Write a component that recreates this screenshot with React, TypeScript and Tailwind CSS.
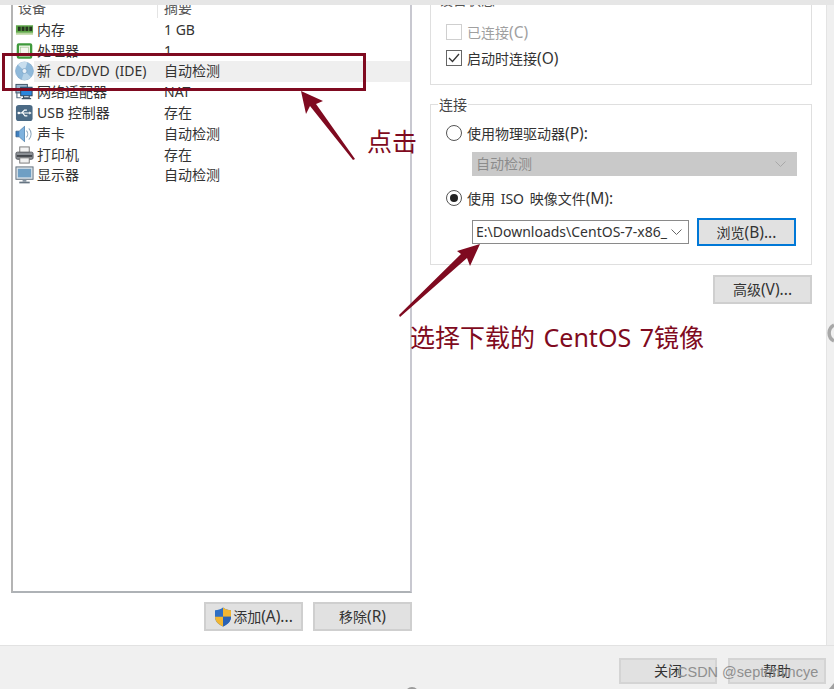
const font = "[font-family:'Noto_Sans','Noto_Sans_CJK_SC',sans-serif]";

function RamIcon() {
  return (
    <svg width="20" height="20" viewBox="0 0 20 20">
      <rect x="1" y="5" width="18" height="8" fill="#5fa84a" />
      <rect x="3" y="6.500" width="3" height="4.500" fill="#26351f" />
      <rect x="7" y="6.500" width="3" height="4.500" fill="#26351f" />
      <rect x="11" y="6.500" width="3" height="4.500" fill="#26351f" />
      <rect x="15" y="6.500" width="3" height="4.500" fill="#26351f" />
      <rect x="1" y="13" width="18" height="2" fill="#b7d49c" />
    </svg>
  );
}

function CpuIcon() {
  return (
    <svg width="20" height="20" viewBox="0 0 20 20">
      <rect x="3" y="3" width="14" height="14" rx="1" fill="#e9f3e2" stroke="#3f9a3c" strokeWidth="2.400" />
      <rect x="6" y="6" width="8" height="8" fill="#f4f7f0" stroke="#9cc48e" strokeWidth="0.600" />
    </svg>
  );
}

function DiscIcon() {
  return (
    <svg width="20" height="20" viewBox="0 0 20 20">
      <circle cx="10" cy="10" r="9.500" fill="#8fb9da" stroke="#7ea5c4" strokeWidth="0.600" />
      <path d="M10 10 L3 3.500 A9.500 9.500 0 0 1 13 1 Z" fill="#c8deee" />
      <path d="M10 10 L17 16.500 A9.500 9.500 0 0 1 7 19 Z" fill="#b5d2e7" />
      <circle cx="10" cy="10" r="2.600" fill="#e8f1f8" stroke="#6f9cc0" strokeWidth="0.700" />
    </svg>
  );
}

function NetworkIcon() {
  return (
    <svg width="20" height="20" viewBox="0 0 20 20">
      <rect x="1" y="2" width="12" height="9" fill="#9bb7cf" stroke="#3d5266" />
      <rect x="6" y="5" width="12" height="9" fill="#2a86dc" stroke="#2b4258" />
      <path d="M9 14v2h6v-2M7 17h10" fill="none" stroke="#3d5266" strokeWidth="1.200" />
      <path d="M2 11v5h4" fill="none" stroke="#5a6f82" strokeWidth="1.200" />
    </svg>
  );
}

function UsbIcon() {
  return (
    <svg width="20" height="20" viewBox="0 0 20 20">
      <rect x="1" y="1.500" width="17.500" height="17" rx="3" fill="#4b6a85" />
      <path d="M3.500 10h12M7 10l3-3h2.500M8 10l2.500 3H13" fill="none" stroke="#fff" strokeWidth="1.200" />
      <path d="M15 8.500l2.500 1.500-2.500 1.500z" fill="#fff" />
      <circle cx="4" cy="10" r="1.400" fill="#fff" />
    </svg>
  );
}

function SpeakerIcon() {
  return (
    <svg width="20" height="20" viewBox="0 0 20 20">
      <path d="M1 7h3.500L10 2v16l-5.500-5H1z" fill="#3f7fbf" stroke="#27557f" strokeWidth="0.700" />
      <path d="M4.500 7L10 2v16l-5.500-5z" fill="#7fb2de" />
      <path d="M12 6.500a5 5 0 0 1 0 7M14.500 4a8.500 8.500 0 0 1 0 12" fill="none" stroke="#8ea7bd" strokeWidth="1.100" />
    </svg>
  );
}

function PrinterIcon() {
  return (
    <svg width="20" height="20" viewBox="0 0 20 20">
      <rect x="5" y="1.500" width="10" height="6" fill="#f4f4f4" stroke="#777" />
      <rect x="1" y="7" width="18" height="7.500" rx="1.500" fill="#8b8f94" stroke="#55595e" />
      <rect x="2" y="10" width="16" height="2" fill="#43474c" />
      <rect x="5" y="13" width="10" height="5.500" fill="#f1f1f1" stroke="#777" />
    </svg>
  );
}

function MonitorIcon() {
  return (
    <svg width="20" height="20" viewBox="0 0 20 20">
      <rect x="1" y="1.500" width="18" height="13" fill="#dce4ea" stroke="#5d6b78" />
      <rect x="3" y="3.500" width="14" height="9" fill="#6f9fc4" />
      <rect x="8" y="14.500" width="4" height="2.500" fill="#8593a0" />
      <rect x="4.500" y="17" width="11" height="1.800" fill="#667582" />
    </svg>
  );
}

function ShieldIcon() {
  return (
    <svg width="18" height="20" viewBox="0 0 18 20">
      <path d="M9 .5C6.500 2.500 4 3 1 3.200V10c0 4.500 3.500 7.500 8 9.500 4.500-2 8-5 8-9.500V3.200C14 3 11.500 2.500 9 .5z" fill="#2f6fc4" />
      <path d="M9 .5C11.500 2.500 14 3 17 3.200v6.500H9z" fill="#f2b632" />
      <path d="M1 9.700h8v9.800C4.500 17.500 1 14.500 1 10z" fill="#f2b632" />
      <path d="M9 9.700h8V10c0 4.500-3.500 7.500-8 9.500z" fill="#2a62b4" />
    </svg>
  );
}

const devices = [
  { icon: <RamIcon />, name: "内存", value: "1 GB" },
  { icon: <CpuIcon />, name: "处理器", value: "1" },
  { icon: <DiscIcon />, name: "新 CD/DVD (IDE)", value: "自动检测", selected: true },
  { icon: <NetworkIcon />, name: "网络适配器", value: "NAT" },
  { icon: <UsbIcon />, name: "USB 控制器", value: "存在" },
  { icon: <SpeakerIcon />, name: "声卡", value: "自动检测" },
  { icon: <PrinterIcon />, name: "打印机", value: "存在" },
  { icon: <MonitorIcon />, name: "显示器", value: "自动检测" },
];

function Chevron({ color }: { color: string }) {
  return (
    <svg width="11" height="6" viewBox="0 0 11 6" fill="none" stroke={color} strokeWidth="1">
      <path d="M.5.500l5 5 5-5" />
    </svg>
  );
}

// latin part of the labels runs larger than the cjk part in the dialog font
function Key({ children }: { children: string }) {
  return <span className="text-[15.500px]">{children}</span>;
}

export default function App() {
  return (
    <div className={`relative w-[834px] h-[689px] overflow-hidden bg-[#f0f0f0] text-[14px] leading-[20px] text-[#333] ${font}`}>
      <div className="h-[5px] bg-[#e6e6e6] relative z-10" />

      <div className="flex">
        <div className="w-[826px] h-[640px] bg-white overflow-hidden flex pl-[11px]">
          {/* device list */}
          <div className="w-[401px] shrink-0">
            <div className="h-[594px] -mt-[6px] border-x-2 border-b-2 border-l-[#b4b4b4] border-r-[#c8c8d0] border-b-[#aeb2b6]">
              <div className="flex h-[20.500px] items-center pb-[2px] text-[#555]">
                <div className="w-[145px] pl-[5px] border-r border-[#e4e4e4]">设备</div>
                <div className="pl-[6px]">摘要</div>
              </div>
              {devices.map((d) => (
                <div key={d.name} className="flex h-[20.800px] items-center">
                  <div className="w-[21px] pl-[2px] shrink-0 flex items-center">{d.icon}</div>
                  <div className={`flex-1 h-full flex items-center pl-[3px] ${d.selected ? "bg-[#efefef]" : ""}`}>
                    <div className={`w-[127px] shrink-0 whitespace-nowrap ${d.selected ? "[word-spacing:2px]" : ""}`}>{d.name}</div>
                    <div>{d.value}</div>
                  </div>
                </div>
              ))}
            </div>
            <div className="flex justify-end gap-[10px] mt-[9px]">
              <button className="w-[99px] h-[29px] border-2 border-[#cfcfcf] bg-[#e1e1e1] flex items-center justify-center">
                <ShieldIcon />
                <span className="ml-[1px]">添加<Key>(A)...</Key></span>
              </button>
              <button className="w-[99px] h-[29px] border-2 border-[#cfcfcf] bg-[#e1e1e1]">移除<Key>(R)</Key></button>
            </div>
          </div>

          {/* settings */}
          <div className="w-[382px] ml-[18px] shrink-0">
            <div className="relative h-[88px] -mt-[8px] border border-[#dfdfdf] pl-[15px] pt-[26px]">
              <span className="absolute -top-[8px] left-[7px] bg-white px-[1px] text-[#555]">设备状态</span>
              <div className="flex items-center gap-[5px] h-[16px] text-[#a0a0a0]">
                <span className="w-[16px] h-[16px] border border-[#cfcfcf] bg-white" />
                <span>已连接<Key>(C)</Key></span>
              </div>
              <div className="flex items-center gap-[5px] h-[16px] mt-[10px]">
                <span className="w-[16px] h-[16px] border border-[#666] bg-white flex items-center justify-center">
                  <svg width="12" height="10" viewBox="0 0 12 10" fill="none" stroke="#333" strokeWidth="1.300">
                    <path d="M1 5l3.500 3.500L11 1" />
                  </svg>
                </span>
                <span>启动时连接<Key>(O)</Key></span>
              </div>
            </div>

            <div className="relative h-[161px] mt-[19px] border border-[#dfdfdf] pl-[15px] pt-[20px]">
              <span className="absolute -top-[10px] left-[7px] bg-white px-[1px] text-[#444]">连接</span>
              <div className="flex items-center gap-[5px] h-[16px]">
                <span className="w-[16px] h-[16px] rounded-full border border-[#555] bg-white" />
                <span>使用物理驱动器<Key>(P):</Key></span>
              </div>
              <div className="ml-[26px] mt-[11px] w-[325px] h-[24px] bg-[#c9c9c9] flex items-center justify-between pl-[4px] pr-[11px] text-[#8c8c8c]">
                自动检测
                <Chevron color="#a8a8a8" />
              </div>
              <div className="flex items-center gap-[5px] h-[16px] mt-[14px]">
                <span className="w-[16px] h-[16px] rounded-full border border-[#555] bg-white flex items-center justify-center">
                  <span className="w-[8px] h-[8px] rounded-full bg-[#222]" />
                </span>
                <span className="[word-spacing:2px]">使用 ISO 映像文件<Key>(M):</Key></span>
              </div>
              <div className="ml-[26px] mt-[12px] flex items-center">
                <div className="w-[217px] h-[24px] border border-[#8a8a8a] bg-white flex items-center justify-between pl-[3px] pr-[6px] whitespace-nowrap">
                  E:\Downloads\CentOS-7-x86_
                  <Chevron color="#666" />
                </div>
                <button className="w-[99px] h-[28px] ml-[8px] border-2 border-[#0078d7] bg-[#e1e1e1]">浏览<Key>(B)...</Key></button>
              </div>
            </div>

            <div className="flex justify-end mt-[10px]">
              <button className="w-[99px] h-[29px] border-2 border-[#cfcfcf] bg-[#e1e1e1]">高级<Key>(V)...</Key></button>
            </div>
          </div>
        </div>
        <div className="flex-1 border-l border-[#e4e4e4]" />
      </div>

      {/* footer */}
      <div className="border-t border-[#e2e2e2] flex justify-end gap-[11px] pt-[12px] pr-[8px]">
        <button className="w-[98px] h-[26px] border-2 border-[#d4d4d4] bg-[#e1e1e1]">关闭</button>
        <button className="w-[98px] h-[26px] border-2 border-[#d4d4d4] bg-[#e1e1e1]">帮助</button>
      </div>

      {/* overlays: csdn watermark, annotation box, arrows and labels */}
      <span className="absolute left-[677px] top-[662px] text-[14.500px] leading-[20px] text-[#8f8f8f] whitespace-nowrap [font-family:'Liberation_Sans',sans-serif]">
        CSDN @septemincye
      </span>
      <div className="absolute left-[2px] top-[53px] w-[364px] h-[38px] border-[3.500px] border-[#7f0a20]" />
      <svg className="absolute left-0 top-0" width="834" height="689" viewBox="0 0 834 689" fill="#7f0a20">
        <polygon points="301,91 323,101 316,104 355,159 353,160 310,106 306,114" />
        <polygon points="480,244 470,266 467,258 400,317 399,315 461,254 457,251" />
        <path d="M834 325a9 9 0 0 0 0 16" fill="none" stroke="#a8a8a8" strokeWidth="3.500" />
        <circle cx="412" cy="694" r="7" fill="#9a9a9a" />
        <path d="M834 683l-5 6h5z" fill="#a0a0a0" />
      </svg>
      <span className="absolute left-[367px] top-[124px] text-[25px] leading-[34px] text-[#7f0a20] whitespace-nowrap">点击</span>
      <span className="absolute left-[410px] top-[320px] text-[25px] leading-[34px] text-[#7f0a20] whitespace-nowrap [word-spacing:2px]">选择下载的 CentOS 7镜像</span>
    </div>
  );
}
